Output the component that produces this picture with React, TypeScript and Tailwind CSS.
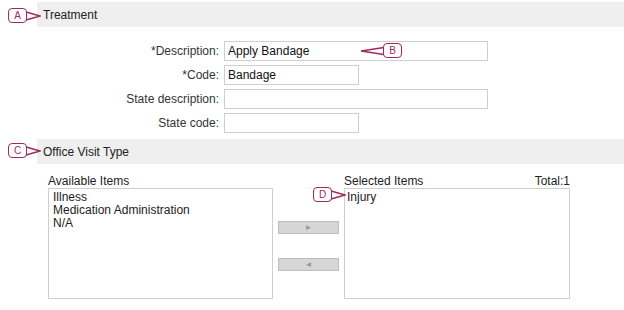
import React from "react";

type Dir = "right" | "left";

function Callout({
  letter,
  className,
  dir,
}: {
  letter: string;
  className: string;
  dir: Dir;
}) {
  // badge box plus a thin outline arrow
  return (
    <div className={`absolute flex items-center ${className}`}>
      {dir === "left" && (
        <svg
          width="24"
          height="10"
          viewBox="0 0 24 10"
          className="-mr-[1px] shrink-0"
        >
          <path
            d="M24 1.5 L1 5 L24 8.5"
            fill="none"
            stroke="#9e2a5c"
            strokeWidth="1.6"
          />
        </svg>
      )}
      <div className="flex h-[15px] w-[19px] shrink-0 items-center justify-center rounded-[4px] border-[1.5px] border-[#9e2a5c] bg-white text-[10px] leading-none text-[#9e2a5c]">
        {letter}
      </div>
      {dir === "right" && (
        <svg
          width="15"
          height="10"
          viewBox="0 0 15 10"
          className="-ml-[1px] shrink-0"
        >
          <path
            d="M0 1 L14 5 L0 9"
            fill="none"
            stroke="#9e2a5c"
            strokeWidth="1.6"
          />
        </svg>
      )}
    </div>
  );
}

function SectionBar({ title }: { title: string }) {
  return (
    <div className="ml-[37px] flex h-[25px] items-center bg-[#efefef] pl-[6px] text-[12px] text-[#222]">
      {title}
    </div>
  );
}

const fields = [
  { label: "*Description:", value: "Apply Bandage", wide: true },
  { label: "*Code:", value: "Bandage", wide: false },
  { label: "State description:", value: "", wide: true },
  { label: "State code:", value: "", wide: false },
];

export default function App() {
  const available = ["Illness", "Medication Administration", "N/A"];
  const selected = ["Injury"];

  return (
    <div
      className="relative h-[310px] w-[624px] overflow-hidden bg-white text-[12px] text-[#222]"
      style={{ fontFamily: '"Liberation Sans", Arial, sans-serif' }}
    >
      <div className="pt-[2px]">
        <SectionBar title="Treatment" />
      </div>

      <div className="mt-[14px] flex flex-col gap-[4px]">
        {fields.map((f) => (
          <div key={f.label} className="flex items-center">
            <div className="w-[220px] pr-[1px] text-right text-[#333]">
              {f.label}
            </div>
            <input
              readOnly
              value={f.value}
              className={`ml-[4px] h-[20px] border border-[#cfcfcf] px-[3px] text-[12px] text-[#111] outline-none ${
                f.wide ? "w-[264px]" : "w-[135px]"
              }`}
            />
          </div>
        ))}
      </div>

      <div className="mt-[6px]">
        <SectionBar title="Office Visit Type" />
      </div>

      <div className="ml-[48px] mt-[10px] flex gap-[5px]">
        <div className="flex w-[225px] flex-col">
          <div className="h-[14px] leading-[14px]">Available Items</div>
          <div className="h-[111px] border border-[#cfcfcf] px-[4px] pt-[2px] leading-[13px]">
            {available.map((a) => (
              <div key={a}>{a}</div>
            ))}
          </div>
        </div>

        <div className="flex w-[61px] flex-col items-center pt-[47px]">
          <button className="flex h-[13px] w-[61px] items-center justify-center border border-[#bdbdbd] bg-[#d6d6d6] text-[8px] leading-none text-[#999]">
            ►
          </button>
          <button className="mt-[24px] flex h-[13px] w-[61px] items-center justify-center border border-[#bdbdbd] bg-[#d6d6d6] text-[8px] leading-none text-[#999]">
            ◄
          </button>
        </div>

        <div className="flex w-[226px] flex-col">
          <div className="flex h-[14px] justify-between leading-[14px]">
            <span>Selected Items</span>
            <span>Total:1</span>
          </div>
          <div className="h-[111px] border border-[#cfcfcf] px-[2px] pt-[2px] leading-[13px]">
            {selected.map((s) => (
              <div key={s}>{s}</div>
            ))}
          </div>
        </div>
      </div>

      <Callout letter="A" dir="right" className="left-[8px] top-[8px]" />
      <Callout letter="B" dir="left" className="left-[360px] top-[43px]" />
      <Callout letter="C" dir="right" className="left-[8px] top-[143px]" />
      <Callout letter="D" dir="right" className="left-[313px] top-[187px]" />
    </div>
  );
}
